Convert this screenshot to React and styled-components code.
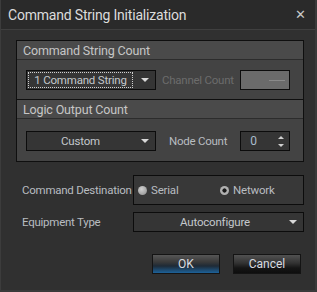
import React from 'react';
import styled, { createGlobalStyle } from 'styled-components';

const GlobalStyle = createGlobalStyle`
  html, body {
    margin: 0;
    padding: 0;
    background: #303030;
    font-family: Roboto, 'Liberation Sans', Arial, sans-serif;
  }
`;

const Window = styled.div`
  width: 317px;
  height: 292px;
  box-sizing: border-box;
  background: #303030;
  border-left: 1px solid #3c3c3c;
  border-right: 2px solid #3a3a3a;
  border-bottom: 2px solid #3a3a3a;
  display: flex;
  flex-direction: column;
  white-space: nowrap;
`;

const TitleBar = styled.div`
  height: 29px;
  flex-shrink: 0;
  background: #2a2a2a;
  border-bottom: 1px solid #3f3f3f;
  display: flex;
  align-items: center;
  justify-content: space-between;
  padding: 0 9px 0 7px;
  color: #dcdcdc;
  font-size: 14px;
  letter-spacing: -0.2px;
`;

const Close = styled.span`
  font-size: 13px;
  color: #c8c8c8;
`;

const Body = styled.div`
  display: flex;
  flex-direction: column;
  padding: 10px 11px 0 15px;
`;

const GroupStack = styled.div`
  border: 1px solid #0f0f0f;
  display: flex;
  flex-direction: column;
`;

const GroupHeader = styled.div`
  height: 18px;
  background: #4a4a4a;
  border-bottom: 1px solid #2c2c2c;
  border-top: ${p => (p.$divider ? '1px solid #0f0f0f' : 'none')};
  color: #c6c6c6;
  font-size: 12.5px;
  letter-spacing: -0.15px;
  display: flex;
  align-items: center;
  padding-left: 6px;
`;

const GroupBody = styled.div`
  background: #434343;
  display: flex;
  align-items: center;
  padding: ${p => p.$pad};
  padding-left: 9px;
  padding-right: 13px;
`;

const Select = styled.div`
  width: ${p => (p.$w ? `${p.$w}px` : 'auto')};
  height: 20px;
  box-sizing: border-box;
  flex-shrink: 0;
  background: #353535;
  border: 1px solid #0c0c0c;
  display: flex;
  align-items: center;
  color: #c4c8cc;
  font-size: 11.5px;
  letter-spacing: -0.2px;
`;

const SelectText = styled.span`
  flex: 1;
  text-align: center;
  margin: 1px 2px 1px 1px;
  padding: 1px 0 1px ${p => p.$indent || 0}px;
  outline: ${p => (p.$focus ? '1px dotted #d0d0d0' : 'none')};
  outline-offset: -1px;
`;

const Arrow = styled.span`
  width: 0;
  height: 0;
  border-left: 4px solid transparent;
  border-right: 4px solid transparent;
  border-top: 4px solid #d8d8d8;
  margin: 0 6px 0 6px;
`;

const Label = styled.span`
  color: ${p => (p.$disabled ? '#6c6c6c' : '#b8bcc0')};
  font-size: 11.5px;
  letter-spacing: -0.25px;
  margin-left: ${p => p.$ml || 0}px;
  flex-shrink: 0;
`;

const Field = styled.div`
  width: 50px;
  height: 20px;
  box-sizing: border-box;
  flex-shrink: 0;
  margin-left: auto;
  border: 1px solid #0c0c0c;
  background: ${p => (p.$disabled ? '#6b6b6b' : '#353535')};
  display: flex;
  align-items: center;
  position: relative;
  color: #a8bccc;
  font-size: 12px;
`;

const DisabledLine = styled.span`
  position: absolute;
  right: 4px;
  top: 9px;
  width: 16px;
  height: 1px;
  background: #8a8a8a;
`;

const SpinValue = styled.span`
  flex: 1;
  text-align: center;
  padding-right: 12px;
`;

const SpinArrows = styled.span`
  display: flex;
  flex-direction: column;
  gap: 5px;
  margin-right: 5px;
`;

const SpinArrow = styled.span`
  width: 0;
  height: 0;
  border-left: 3px solid transparent;
  border-right: 3px solid transparent;
  ${p => (p.$up ? 'border-bottom: 3px solid #d0d0d0;' : 'border-top: 3px solid #d0d0d0;')}
`;

const Form = styled.div`
  display: grid;
  grid-template-columns: 1fr 171px;
  align-items: center;
  row-gap: 7px;
  margin-top: 13px;
  padding-left: 6px;
`;

const RadioBox = styled.div`
  height: 30px;
  box-sizing: border-box;
  background: #383838;
  border: 1px solid #0c0c0c;
  display: flex;
  align-items: center;
  padding-left: 4px;
`;

const RadioItem = styled.label`
  display: flex;
  align-items: center;
  gap: 4px;
  width: ${p => (p.$w ? `${p.$w}px` : 'auto')};
  color: #b8bcc0;
  font-size: 11.5px;
  letter-spacing: -0.2px;
`;

const RadioDot = styled.span`
  width: 9px;
  height: 9px;
  flex-shrink: 0;
  border-radius: 50%;
  box-sizing: border-box;
  background: ${p =>
    p.$checked
      ? 'radial-gradient(circle, #1a1a1a 0 1.8px, #b0b0b0 2.4px)'
      : 'radial-gradient(circle at 40% 35%, #d0d0d0, #8c8c8c)'};
`;

const Buttons = styled.div`
  display: flex;
  justify-content: flex-end;
  gap: 13px;
  margin-top: 22px;
  padding-right: 3px;
`;

const Button = styled.button`
  width: 68px;
  height: 20px;
  border: none;
  padding: 0;
  font-family: inherit;
  font-size: 12px;
  color: #d8dce0;
  box-shadow: inset 0 0 0 1px #141414;
  background: ${p =>
    p.$primary
      ? 'linear-gradient(#5a5a5a 0%, #3a3a3a 40%, #1e2a36 60%, #1d6aa8 100%)'
      : 'linear-gradient(#555 0%, #333 45%, #151515 70%, #0c0c0c 100%)'};
`;

export default function App() {
  return (
    <>
      <GlobalStyle />
      <Window>
        <TitleBar>
          <span>Command String Initialization</span>
          <Close>✕</Close>
        </TitleBar>
        <Body>
          <GroupStack>
            <GroupHeader>Command String Count</GroupHeader>
            <GroupBody $pad="10px 0 9px">
              <Select $w={130}>
                <SelectText $focus>1 Command String</SelectText>
                <Arrow />
              </Select>
              <Label $disabled $ml={6}>Channel Count</Label>
              <Field $disabled>
                <DisabledLine />
              </Field>
            </GroupBody>
            <GroupHeader $divider>Logic Output Count</GroupHeader>
            <GroupBody $pad="12px 0 10px">
              <Select $w={130}>
                <SelectText>Custom</SelectText>
                <Arrow />
              </Select>
              <Label $ml={13}>Node Count</Label>
              <Field>
                <SpinValue>0</SpinValue>
                <SpinArrows>
                  <SpinArrow $up />
                  <SpinArrow />
                </SpinArrows>
              </Field>
            </GroupBody>
          </GroupStack>
          <Form>
            <Label>Command Destination</Label>
            <RadioBox>
              <RadioItem $w={82}>
                <RadioDot />
                Serial
              </RadioItem>
              <RadioItem>
                <RadioDot $checked />
                Network
              </RadioItem>
            </RadioBox>
            <Label>Equipment Type</Label>
            <Select>
              <SelectText $indent={14}>Autoconfigure</SelectText>
              <Arrow />
            </Select>
          </Form>
          <Buttons>
            <Button $primary>OK</Button>
            <Button>Cancel</Button>
          </Buttons>
        </Body>
      </Window>
    </>
  );
}
